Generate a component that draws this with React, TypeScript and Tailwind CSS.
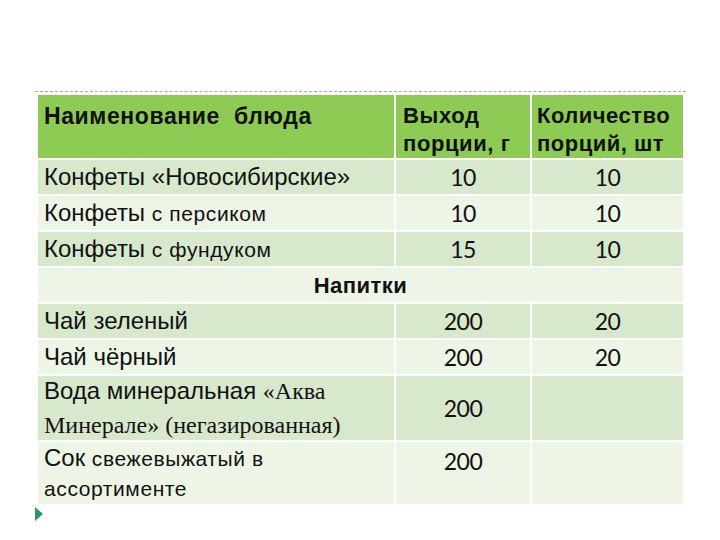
import React from 'react'

const sans = "font-['Liberation_Sans',Arial,sans-serif]"
const serif = "font-['Liberation_Serif','Times_New_Roman',serif]"
const nums = "font-['Lato','Open_Sans',sans-serif]"

const dark = 'bg-[#d8e8cc]'
const light = 'bg-[#edf5e7]'
const small = 'text-[21px] tracking-[0.6px]'

function NameCell({
  bg,
  children,
  h = 'h-[34px]',
  lh = 'leading-[30px]',
}: {
  bg: string
  children: React.ReactNode
  h?: string
  lh?: string
}) {
  return (
    <div className={`${bg} ${h} flex items-center px-[6px] text-[24px] ${lh} text-[#111] ${sans}`}>
      <div>{children}</div>
    </div>
  )
}

function NumCell({ bg, value, h = 'h-[34px]', top = false }: { bg: string; value?: string; h?: string; top?: boolean }) {
  return (
    <div
      className={`${bg} ${h} flex justify-center text-[23px] tracking-[-0.5px] text-[#111] ${nums} ${
        top ? 'items-start pt-[2px]' : 'items-center'
      }`}
    >
      {value}
    </div>
  )
}

export default function App() {
  return (
    <div className="relative h-[540px] w-[720px] overflow-hidden bg-white">
      <div className="pl-[35px] pt-[91px]">
        <div className="w-[651px] border-t border-dashed border-[#8fb3bd]" />

        <div className="ml-[3px] mt-[3px] grid grid-cols-[356px_134px_151px] gap-[2px] bg-white">
          {/* header */}
          <div className={`h-[63px] bg-[#8ecb55] px-[6px] pt-[7px] text-[23px] font-bold leading-[28px] tracking-[0.6px] text-[#111] ${sans}`}>
            Наименование&nbsp; блюда
          </div>
          <div className={`h-[63px] bg-[#8ecb55] pl-[7px] pt-[7px] text-[22px] font-bold leading-[28px] tracking-[0.6px] text-[#111] ${sans}`}>
            Выход
            <br />
            порции, г
          </div>
          <div className={`h-[63px] bg-[#8ecb55] pl-[5px] pt-[7px] text-[22px] font-bold leading-[28px] tracking-[0.5px] text-[#111] ${sans}`}>
            Количество
            <br />
            порций, шт
          </div>

          <NameCell bg={dark}>Конфеты «Новосибирские»</NameCell>
          <NumCell bg={dark} value="10" />
          <NumCell bg={dark} value="10" />

          <NameCell bg={light}>
            Конфеты <span className={small}>с персиком</span>
          </NameCell>
          <NumCell bg={light} value="10" />
          <NumCell bg={light} value="10" />

          <NameCell bg={dark}>
            Конфеты <span className={small}>с фундуком</span>
          </NameCell>
          <NumCell bg={dark} value="15" />
          <NumCell bg={dark} value="10" />

          <div className={`col-span-3 flex h-[34px] items-center justify-center ${light} text-[22px] font-bold tracking-[0.5px] text-[#111] ${sans}`}>
            Напитки
          </div>

          <NameCell bg={dark}>Чай зеленый</NameCell>
          <NumCell bg={dark} value="200" />
          <NumCell bg={dark} value="20" />

          <NameCell bg={light}>Чай чёрный</NameCell>
          <NumCell bg={light} value="200" />
          <NumCell bg={light} value="20" />

          <NameCell bg={dark} h="h-[64px]" lh="leading-[33px]">
            Вода минеральная <span className={serif}>«Аква</span>
            <br />
            <span className={serif}>Минерале» (негазированная)</span>
          </NameCell>
          <NumCell bg={dark} value="200" h="h-[64px]" />
          <NumCell bg={dark} h="h-[64px]" />

          <NameCell bg={light} h="h-[62px]" lh="leading-[29px]">
            Сок <span className={small}>свежевыжатый в</span>
            <br />
            <span className={small}>ассортименте</span>
          </NameCell>
          <NumCell bg={light} value="200" h="h-[62px]" top />
          <NumCell bg={light} h="h-[62px]" />
        </div>

        <svg className="mt-[3px] block" width="9" height="14" viewBox="0 0 9 14">
          <polygon points="0,0 8,7 0,14" fill="#2a9d5c" />
        </svg>
      </div>
    </div>
  )
}
